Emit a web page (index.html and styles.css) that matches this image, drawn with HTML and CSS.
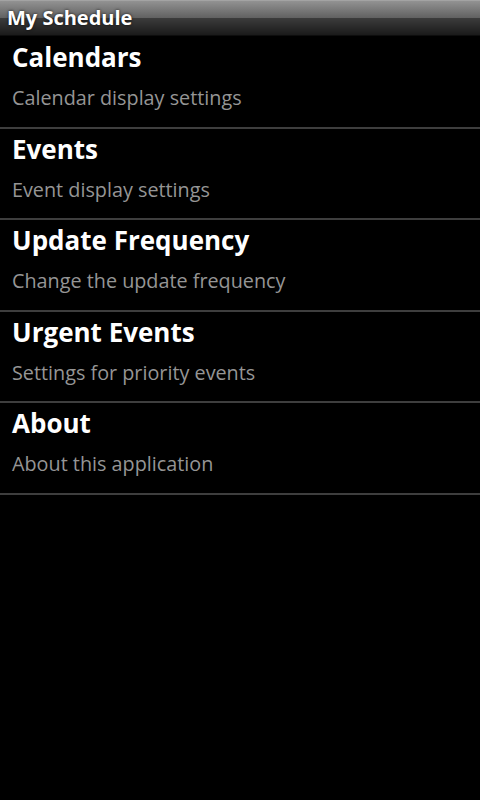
FILE: index.html
```
<!DOCTYPE html>
<html>
<head>
<meta charset="utf-8">
<link rel="stylesheet" href="styles.css">
</head>
<body>
<div class="titlebar"><span class="title">My Schedule</span></div>
<ul class="prefs">
  <li class="pref"><div class="pref-title">Calendars</div><div class="pref-summary">Calendar display settings</div></li>
  <li class="pref"><div class="pref-title">Events</div><div class="pref-summary">Event display settings</div></li>
  <li class="pref"><div class="pref-title">Update Frequency</div><div class="pref-summary">Change the update frequency</div></li>
  <li class="pref"><div class="pref-title">Urgent Events</div><div class="pref-summary">Settings for priority events</div></li>
  <li class="pref"><div class="pref-title">About</div><div class="pref-summary">About this application</div></li>
</ul>
</body>
</html>
```
FILE: styles.css
```
html, body {
  margin: 0;
  padding: 0;
  background: #000;
  height: 100%;
}
body {
  font-family: "Open Sans", "Noto Sans", "DejaVu Sans", sans-serif;
  color: #fff;
}
.titlebar {
  height: 37px;
  box-sizing: border-box;
  padding-left: 7px;
  background: linear-gradient(to bottom, #b4b4b4 0, #929292 1px, #616161 18px, #3c3c3c 18px, #1a1a1a 35px, #000 36px);
  display: flex;
  align-items: flex-start;
}
.title {
  font-size: 20px;
  font-weight: bold;
  line-height: 28px;
  padding-top: 4px;
  color: #fff;
  text-shadow: 0 0 3px rgba(0,0,0,0.8);
}
.prefs {
  list-style: none;
  margin: 0;
  padding: 0;
}
.pref {
  height: 91.5px;
  box-sizing: border-box;
  padding: 4px 12px 0 12px;
  border-bottom: 2px solid #3e3e3e;
}
.pref-title {
  font-size: 26px;
  font-weight: bold;
  line-height: 32px;
  color: #fff;
}
.pref-summary {
  margin-top: 12px;
  font-size: 19.8px;
  line-height: 26px;
  color: #959595;
}
```
